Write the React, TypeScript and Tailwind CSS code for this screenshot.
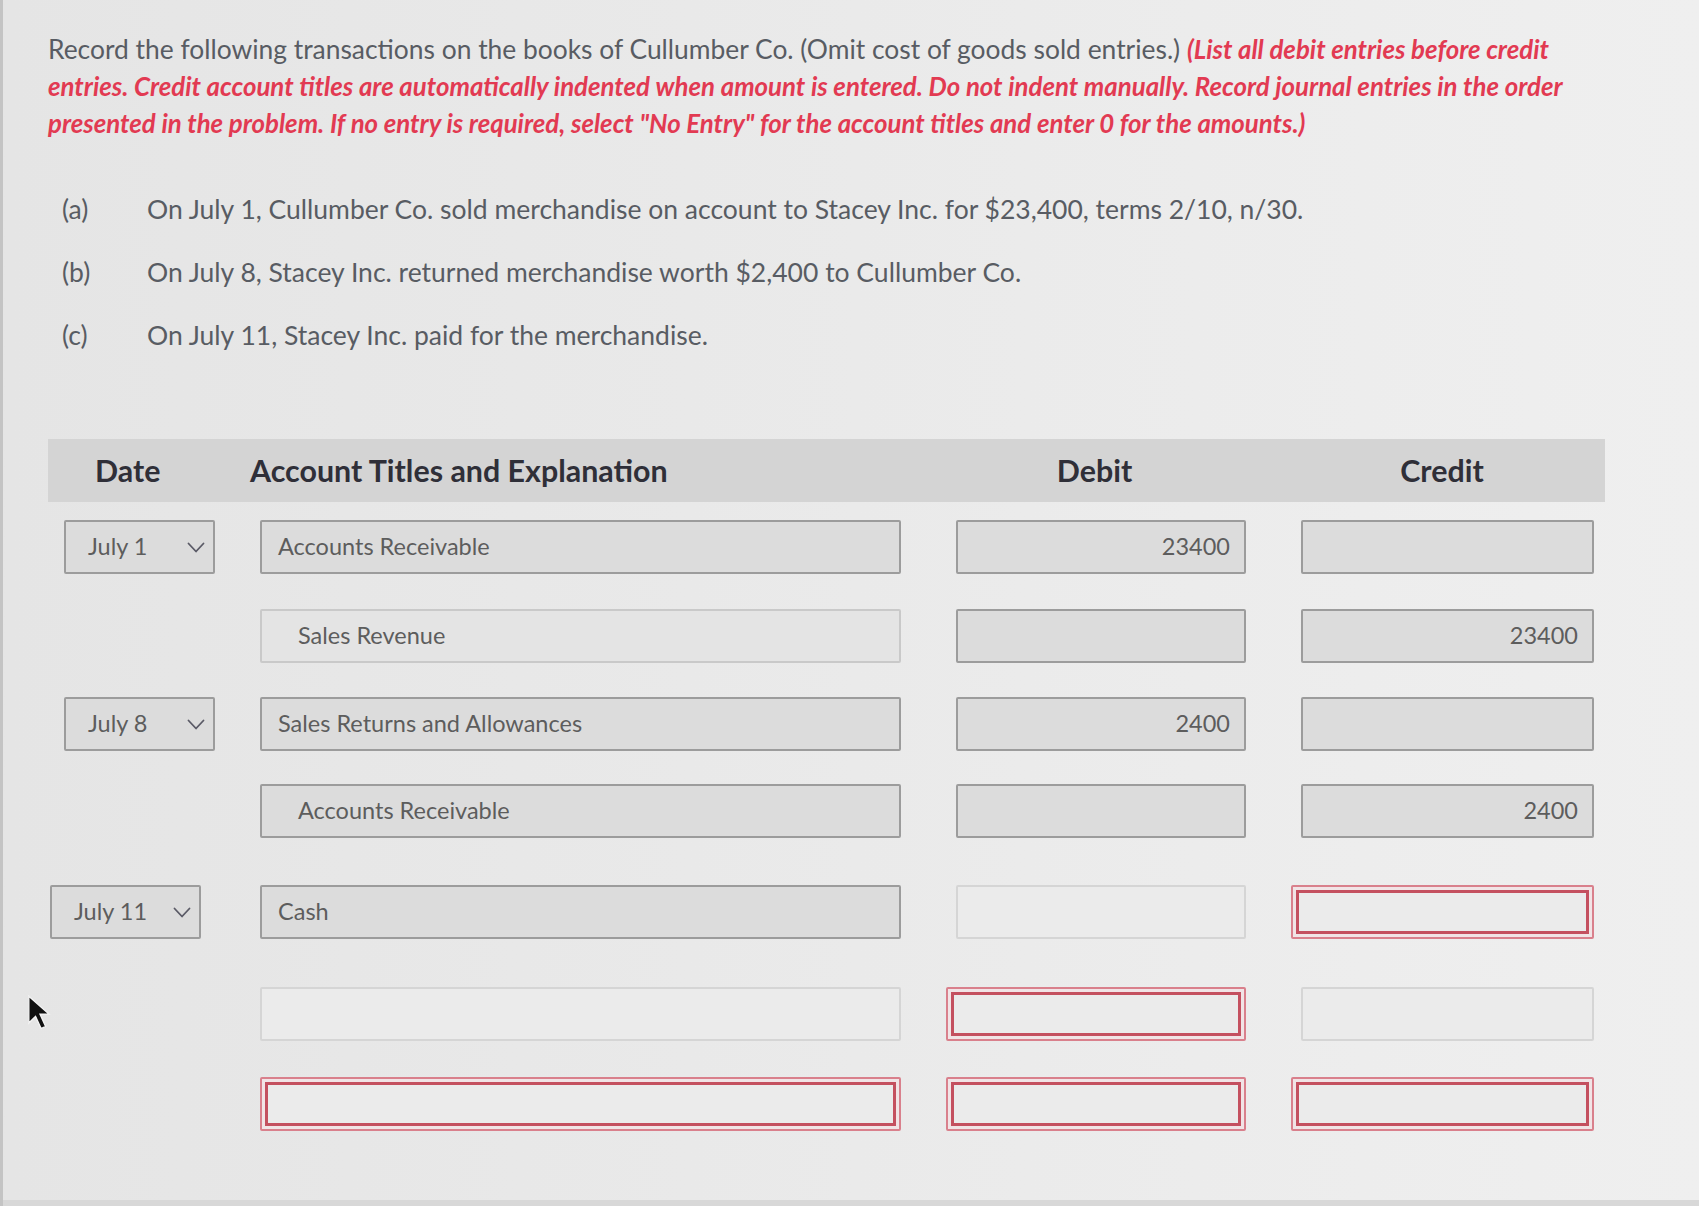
import React from "react";

const font = { fontFamily: "Lato, 'Open Sans', sans-serif" } as const;

function Chevron() {
  return (
    <svg width="18" height="11" viewBox="0 0 18 11" fill="none" className="shrink-0">
      <path d="M1.5 1.5 L9 9.5 L16.5 1.5" stroke="#5a5a66" strokeWidth="1.8" strokeLinecap="round" strokeLinejoin="round" />
    </svg>
  );
}

function DateBox({ label }: { label: string }) {
  return (
    <div className="w-[151px] h-[54px] border-2 border-[#9c9c9c] rounded-[2px] bg-[#dcdcdc] flex items-center justify-between pl-[22px] pr-[8px]">
      <span className="text-[23.5px] text-[#5d5d5d]">{label}</span>
      <Chevron />
    </div>
  );
}

type Kind = "filled" | "soft" | "empty" | "red";

function Field({ kind, text, indent, right, w }: { kind: Kind; text?: string; indent?: boolean; right?: boolean; w: string }) {
  if (kind === "red") {
    return (
      <div className={`${w} h-[54px] border-2 border-[#d9808c] rounded-[2px] p-[3px] bg-[#f1e4e6]`}>
        <div className="w-full h-full border-[3px] border-[#c4505f] bg-[#ebebeb]" />
      </div>
    );
  }
  const cls =
    kind === "filled"
      ? "border-2 border-[#9c9c9c] bg-[#dcdcdc]"
      : kind === "soft"
      ? "border-2 border-[#c9c9c9] bg-[#e4e4e4]"
      : "border-2 border-[#d5d5d5] bg-[#ebebeb]";
  return (
    <div
      className={`${w} h-[54px] ${cls} rounded-[2px] flex items-center ${right ? "justify-end pr-[14px]" : indent ? "pl-[36px]" : "pl-[16px]"}`}
    >
      {text ? <span className="text-[23.5px] text-[#5d5d5d]">{text}</span> : null}
    </div>
  );
}

function Row({
  mt,
  date,
  dateShift,
  account,
  debit,
  credit,
}: {
  mt: string;
  date?: string;
  dateShift?: boolean;
  account: { kind: Kind; text?: string; indent?: boolean };
  debit: { kind: Kind; text?: string };
  credit: { kind: Kind; text?: string };
}) {
  return (
    <div className={`flex items-start ${mt}`}>
      <div className="w-[212px] shrink-0 flex">
        {date ? (
          <div className={dateShift ? "ml-[2px]" : "ml-[16px]"}>
            <DateBox label={date} />
          </div>
        ) : null}
      </div>
      <Field kind={account.kind} text={account.text} indent={account.indent} w="w-[641px]" />
      {debit.kind === "red" ? (
        <div className="ml-[45px]">
          <Field kind="red" w="w-[300px]" />
        </div>
      ) : (
        <div className="ml-[55px]">
          <Field kind={debit.kind} text={debit.text} right w="w-[290px]" />
        </div>
      )}
      {credit.kind === "red" ? (
        <div className="ml-[45px]">
          <Field kind="red" w="w-[303px]" />
        </div>
      ) : (
        <div className="ml-[55px]">
          <Field kind={credit.kind} text={credit.text} right w="w-[293px]" />
        </div>
      )}
    </div>
  );
}

export default function App() {
  return (
    <div
      className="relative w-[1699px] min-h-[1206px] bg-gradient-to-r from-[#e5e5e5] via-[#eaeaea] to-[#efefef] border-l-[3px] border-[#c4c4c4] pl-[45px] pt-[31px] overflow-hidden"
      style={font}
    >
      <div className="text-[26.4px] leading-[37px] text-[#585c63] whitespace-nowrap">
        <div>
          Record the following transactions on the books of Cullumber Co. (Omit cost of goods sold entries.){" "}
          <span className="italic font-bold text-[25.8px] text-[#e23a52]">(List all debit entries before credit</span>
        </div>
        <div className="italic font-bold text-[25.8px] text-[#e23a52]">
          entries. Credit account titles are automatically indented when amount is entered. Do not indent manually. Record
          journal entries in the order
        </div>
        <div className="italic font-bold text-[25.8px] text-[#e23a52]">
          presented in the problem. If no entry is required, select "No Entry" for the account titles and enter 0 for the
          amounts.)
        </div>
      </div>

      <div className="mt-[36px] text-[26.5px] text-[#585c63]">
        {[
          ["(a)", "On July 1, Cullumber Co. sold merchandise on account to Stacey Inc. for $23,400, terms 2/10, n/30."],
          ["(b)", "On July 8, Stacey Inc. returned merchandise worth $2,400 to Cullumber Co."],
          ["(c)", "On July 11, Stacey Inc. paid for the merchandise."],
        ].map(([k, t]) => (
          <div key={k} className="flex h-[63px] items-center">
            <span className="w-[99px] pl-[14px] shrink-0">{k}</span>
            <span>{t}</span>
          </div>
        ))}
      </div>

      <div className="mt-[72px] w-[1557px] h-[63px] bg-[#d4d4d4] flex items-center text-[30.4px] font-bold text-[#2f2f38]">
        <div className="w-[202px] pl-[47px] shrink-0">Date</div>
        <div className="w-[695px] shrink-0">Account Titles and Explanation</div>
        <div className="w-[299px] shrink-0 text-center">Debit</div>
        <div className="ml-[47px] w-[302px] shrink-0 text-center">Credit</div>
      </div>

      <Row
        mt="mt-[18px]"
        date="July 1"
        account={{ kind: "filled", text: "Accounts Receivable" }}
        debit={{ kind: "filled", text: "23400" }}
        credit={{ kind: "filled" }}
      />
      <Row
        mt="mt-[35px]"
        account={{ kind: "soft", text: "Sales Revenue", indent: true }}
        debit={{ kind: "filled" }}
        credit={{ kind: "filled", text: "23400" }}
      />
      <Row
        mt="mt-[34px]"
        date="July 8"
        account={{ kind: "filled", text: "Sales Returns and Allowances" }}
        debit={{ kind: "filled", text: "2400" }}
        credit={{ kind: "filled" }}
      />
      <Row
        mt="mt-[33px]"
        account={{ kind: "filled", text: "Accounts Receivable", indent: true }}
        debit={{ kind: "filled" }}
        credit={{ kind: "filled", text: "2400" }}
      />
      <Row
        mt="mt-[47px]"
        date="July 11"
        dateShift
        account={{ kind: "filled", text: "Cash" }}
        debit={{ kind: "empty" }}
        credit={{ kind: "red" }}
      />
      <Row mt="mt-[48px]" account={{ kind: "empty" }} debit={{ kind: "red" }} credit={{ kind: "empty" }} />
      <Row mt="mt-[36px]" account={{ kind: "red" }} debit={{ kind: "red" }} credit={{ kind: "red" }} />

      <svg className="absolute left-[22px] top-[994px]" width="30" height="38" viewBox="0 0 26 34">
        <path d="M3 2 L3 26 L9 20 L14 31 L18 29 L13 18 L21 18 Z" fill="#111" stroke="#f4f4f4" strokeWidth="1.2" />
      </svg>
      <div className="absolute left-0 right-0 bottom-0 h-[6px] bg-[#d8d8d8]" />
    </div>
  );
}
